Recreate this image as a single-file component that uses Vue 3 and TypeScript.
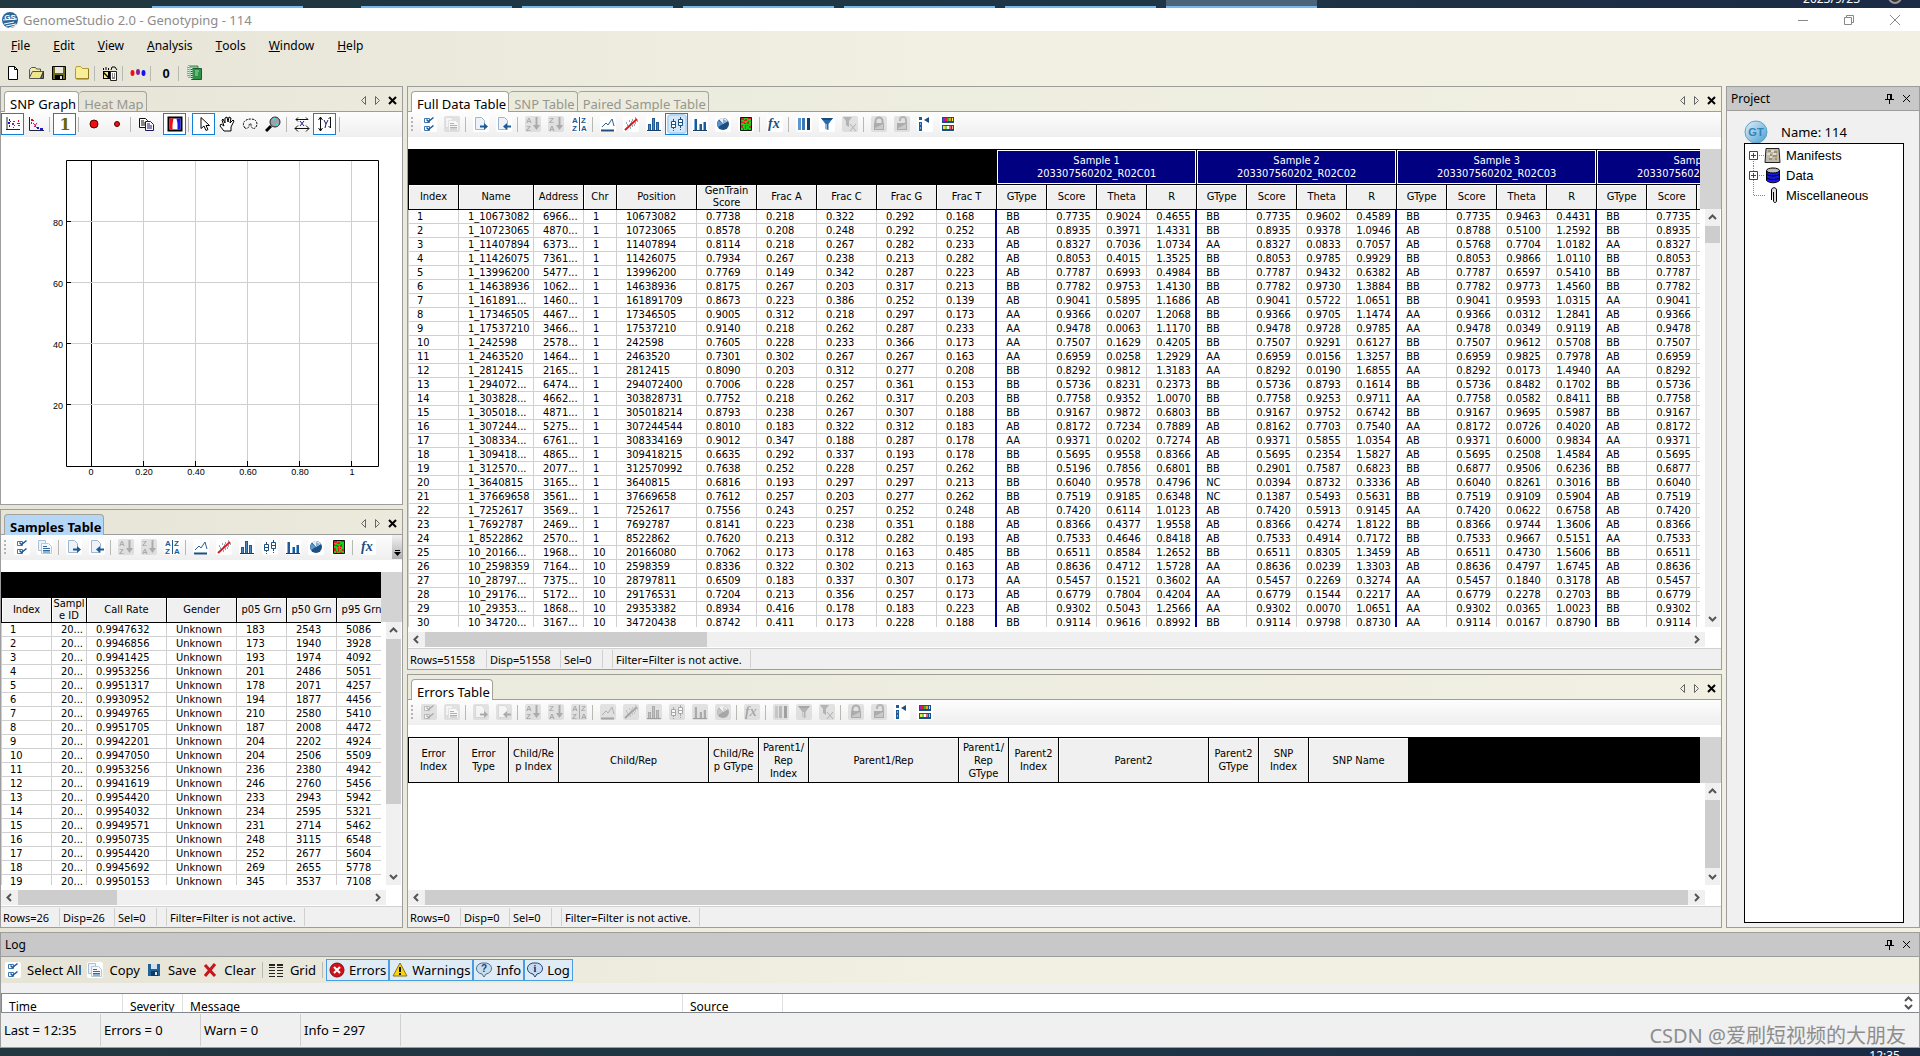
<script setup lang="ts">
import { ref } from 'vue'

interface Tool {
  icon: string
  label: string
  on?: boolean
  off?: boolean
  sep?: boolean
  gap?: boolean
}

const F = 'font-family="Liberation Sans, sans-serif"'
const pie = '<circle cx="8" cy="8" r="6" fill="#1d4f80"/><path d="M8 8L4 3.500A6 6 0 0 1 13 5z" fill="#fff" opacity=".9"/><path d="M8 8V3l4 2z" fill="#7fb0dd"/><path d="M8 8L3 11A6 6 0 0 1 3.500 4.500z" fill="#5a96d2"/>'
const letters = (a: string, b: string) =>
  `<text x="1" y="7" font-size="8" font-weight="bold" fill="#1d5a96" ${F}>${a}</text><text x="1" y="15" font-size="8" font-weight="bold" fill="#1d5a96" ${F}>${b}</text>`

const icons: Record<string, string> = {
  new: '<path d="M3.500 1.500h6l3 3v10h-9z" fill="#fff" stroke="#000"/><path d="M9.500 1.500v3h3" fill="none" stroke="#000"/>',
  open: '<path d="M1.500 4.500l2-2h4l1 1.500h4v3" fill="#f5efa0" stroke="#555"/><path d="M1.500 4.500v9h11l3-7h-11l-3 6" fill="#efe68a" stroke="#555"/><path d="M12.500 13.500l3-7v7z" fill="#777" stroke="#333"/>',
  save: '<path d="M1.500 1.500h13v13h-13z" fill="#6b6a12" stroke="#000"/><path d="M4 2h8v6H4z" fill="#e8e7d8"/><path d="M4 10h8v4H4z" fill="#000"/><path d="M9 11h2v3H9z" fill="#ddd"/>',
  folder: '<path d="M1.500 3.500l1-2h4l2 2h6v10h-13z" fill="#f9ee98" stroke="#b39a35"/><path d="M14.500 4v10h-12" fill="none" stroke="#8d7720"/>',
  props: '<path d="M1 6h13v8H1z" fill="#000"/><path d="M2 7l4 0v4z" fill="#f3ed80"/><path d="M2 9l4 4H2z" fill="#fff36b"/><path d="M1.500 5V3M4 5V2M6.500 5V3M9 5l1-3h3l2 3" fill="none" stroke="#000"/><path d="M8.500 6.500h6v9h-6z" fill="#fff" stroke="#222"/><path d="M10 9h1M12 9h1M10 11h1M12 11h1M10 13h3" stroke="#111"/>',
  dots: '<ellipse cx="2.500" cy="8" rx="2" ry="3" fill="#f01010"/><ellipse cx="8" cy="7" rx="2" ry="3" fill="#8a1f98"/><ellipse cx="13.500" cy="8" rx="2" ry="3" fill="#1414ee"/>',
  zero: '<text x="8" y="13" font-size="13" font-weight="bold" text-anchor="middle" fill="#000" font-family="Liberation Sans, sans-serif">0</text>',
  book: '<path d="M2 1h10v11H2z" fill="#7cc98a" stroke="#3d8a50"/><path d="M5.500 3.500h10v11h-10z" fill="#2f9148" stroke="#1b5c2c"/><path d="M2.500 1v12M5.500 3v12" stroke="#eee" stroke-dasharray="1 1" stroke-width="2"/><path d="M9 6h4M9 8h3M9 10h3" stroke="#9be0a8"/>',
  cart: '<path d="M2 1v13M1 13.500h14" stroke="#223" fill="none"/><path d="M4 3h1v2H4zM3 6h2v2H3zM4 9h1v2H4zM5 5h1v1H5z" fill="#1414dd"/><path d="M8 5h2v1H8zM7 7h2v2H7zM9 9h1v1H9zM8 11h1v1H8z" fill="#8a1f98"/><path d="M13 4h1v2h-1zM12 7h3v1h-3zM13 9h2v1h-2z" fill="#e01010"/>',
  polar: '<path d="M1.500 1v13.500H16" stroke="#224" fill="none"/><path d="M3 3h2v2H3zM3 6h1v2H3zM5 4h1v1H5z" fill="#e01010"/><path d="M5 7l3 3M7 10l2 2M9 7l-3 4" stroke="#a02080"/><path d="M9 11h2v2H9zM12 12h3v2h-3z" fill="#1414dd"/>',
  one: '<text x="8" y="14" font-size="16" font-weight="bold" text-anchor="middle" fill="#6b6a00" font-family="DejaVu Serif, serif">1</text>',
  bigdot: '<circle cx="8" cy="8" r="4" fill="#ee1111" stroke="#500"/>',
  dot: '<circle cx="8" cy="8" r="2.500" fill="#ee1111" stroke="#500"/>',
  copy: '<path d="M1.500 2.500h6l2 2v7h-8z" fill="#fff" stroke="#111"/><path d="M3 5h3M3 7h4M3 9h4" stroke="#111"/><path d="M7.500 5.500h5l3 3v6h-8z" fill="#fff" stroke="#15156a"/><path d="M9 8h3M9 10h5M9 12h5" stroke="#15156a"/>',
  shade: '<path d="M1.500 1.500h13v13h-13z" fill="#fff" stroke="#000" stroke-width="2"/><path d="M2.500 2.500h4l-1 6v5h-3z" fill="#ee1111"/><path d="M13.500 2.500h-4l1 5v6h3z" fill="#1414ee"/>',
  arrow: '<path d="M5 1.500v11l3-2.500 2 4.500 2-1-2-4h3.500z" fill="#fff" stroke="#000"/>',
  hand: '<path d="M5 15l-4-5 1-2 3 2-2-6 1-1 2 4V2l2-1 1 5 1-5 2 1-1 5 3-3 1 1-3 6v4z" fill="#fff" stroke="#000"/>',
  lasso: '<path d="M3 12C-1 7 3 3 9 3s7 5 5 8-5 1-5-2-2-1-2 1-3 3-4 2z" fill="none" stroke="#000" stroke-dasharray="2 1"/>',
  lens: '<circle cx="10" cy="6" r="5" fill="#9ca3a6" stroke="#222"/><path d="M8 4l2-2M11 9l2-1" stroke="#38e0e8" stroke-width="2"/><path d="M6 10l-5 5" stroke="#000" stroke-width="3"/>',
  wide: '<path d="M2 3.500h12M2 3.500l2-2M2 3.500l2 2M14 3.500l-2-2M1 12.500h14M1 12.500l3-3M1 12.500l3 3M15 12.500l-3-3M15 12.500l-3 3" stroke="#111" fill="none"/><path d="M6 5l4 5M10 5l-4 5" stroke="#171780"/>',
  tall: '<path d="M3.500 1v14M3.500 1l-2 3M3.500 1l2 3M3.500 15l-2-3M3.500 15l2-3M13.500 1v11M13.500 1l-2 2M13.500 12l-2-2" stroke="#111" fill="none"/><path d="M7 4l2 4 2-4M9 8l-1 4" stroke="#171780" fill="none"/>',
  checks: '<path d="M3.500 2.500h5v4h-5zM3.500 10.500h5v4h-5z" fill="#fff" stroke="#3b76ae"/><path d="M5.500 3.500l2 2 5-4M5.500 11.500l2 2 5-4" fill="none" stroke="#1c5a96" stroke-width="1.500"/>',
  docs: '<path d="M1.500 1.500h7v10h-7z" fill="#eaf2fa" stroke="#a8bfd6"/><path d="M4.500 4.500h7l3 3v7h-10z" fill="#f5f9fd" stroke="#b5c8da"/><path d="M6 7.500h4M6 9.500h7M6 11.500h7M6 13h7" stroke="#31689c"/>',
  exp: '<path d="M2.500 1.500h6l3 3v9h-9z" fill="#edf3f9" stroke="#9db6cd"/><path d="M7 10.500h5" stroke="#1d5a96" stroke-width="2"/><path d="M11 7l4 3.500-4 3.500z" fill="#1d5a96"/>',
  imp: '<path d="M2.500 1.500h6l3 3v9h-9z" fill="#edf3f9" stroke="#9db6cd"/><path d="M10 10.500h5" stroke="#1d5a96" stroke-width="2"/><path d="M11 7l-4 3.500 4 3.500z" fill="#1d5a96"/>',
  az: letters('A', 'Z') + '<path d="M11.500 1v10" stroke="#1d5a96" stroke-width="2"/><path d="M8 9h7l-3.500 5z" fill="#1d5a96"/>',
  za: letters('Z', 'A') + '<path d="M11.500 1v10" stroke="#1d5a96" stroke-width="2"/><path d="M8 9h7l-3.500 5z" fill="#1d5a96"/>',
  azza: `<g font-size="8" font-weight="bold" fill="#1d5a96" ${F}><text x="1" y="7">A</text><text x="1" y="15">Z</text><text x="10" y="7">Z</text><text x="10" y="15">A</text></g><path d="M8.500 1v14" stroke="#1d5a96"/>`,
  line: '<path d="M1 14.500h13" stroke="#1d4f80" stroke-width="2"/><path d="M2 11l4-4 2 2 4-6 2 7" fill="none" stroke="#2a6299"/>',
  scat: '<path d="M2 14L14 3" stroke="#dd1b1b" stroke-width="2"/><path d="M4 9h1M7 8h1M6 5h1M9 4h1M12 2h1M12 7h1M9 10h1M11 9h1M14 5h1M7 12h1M8 6h1M3 7h1" stroke="#1d4f80"/>',
  hist: '<path d="M2 8h3v6H2zM6 2h3v12H6zM10 6h3v8h-3z" fill="#1d5a96"/><path d="M3 9h1v5H3zM7 3h1v11H7zM11 7h1v7h-1z" fill="#4f87bd"/><path d="M1 14.500h14" stroke="#163f66"/>',
  box: '<path d="M2.500 5.500h4v6h-4zM9.500 3.500h4v6h-4z" fill="#fff" stroke="#1d4f80"/><path d="M4.500 3v2M4.500 12v1M11.500 1v2M11.500 10v2M2 8.500h5M9 6.500h5" stroke="#1d4f80"/><path d="M4 14h1v1H4zM11 13h1v1h-1z" fill="#c11"/>',
  bars: '<path d="M2 3h3v11H2zM7 8h3v6H7zM11 6h3v8h-3z" fill="#1d5a96"/><path d="M2 3h1v11H2zM7 8h1v6H7zM11 6h1v8h-1z" fill="#7fb0dd"/><path d="M1 14.500h14" stroke="#163f66"/>',
  pie,
  heat: '<path d="M2.500 1.500h11v13h-11z" fill="#17d017" stroke="#111"/><path d="M3 2h3v2H3zM7 3h2v2H7zM10 2h3v1h-3zM4 6h3v1H4zM9 6h2v2H9zM3 9h2v3H3zM7 9h1v4H7zM11 10h2v2h-2zM5 12h1v2H5zM10 5h1v1h-1zM6 7h2v1H6zM3 5h1v2H3zM9 9h1v1H9zM9 13h2v1H9zM6 4h1v1H6z" fill="#e81c1c"/>',
  fx: '<text x="1" y="12" font-size="14" font-style="italic" font-weight="bold" fill="#1d4f80" font-family="Liberation Serif, serif">fx</text>',
  cols: '<path d="M2 2h3v12H2z" fill="#5a96d2"/><path d="M6 2h3v12H6z" fill="#3a78b8"/><path d="M11 2h3v12h-3z" fill="#163f66"/>',
  filter: '<path d="M2 2h12L9.500 8v6l-3-1V8z" fill="#2a6aa8"/><path d="M2 2h12l-2 2H4z" fill="#174b7c"/><path d="M7 8h1v5H7z" fill="#8bb8e0"/>',
  unfilter: '<path d="M1 1h9L7 5v6L4 9V5z" fill="#2a6aa8"/><path d="M8 8l6 7M14 8l-6 7" stroke="#2a6aa8"/>',
  lock: '<path d="M4.500 8V5a3.500 3.500 0 0 1 7 0v3" fill="none" stroke="#456" stroke-width="2"/><path d="M3 7h10v7H3z" fill="#456"/><path d="M4 12l8-4v5H4z" fill="#89a"/>',
  unlock: '<path d="M6 5V4a3 3 0 0 1 6 0v4" fill="none" stroke="#567" stroke-width="2"/><path d="M3 7h10v7H3z" fill="#456"/><path d="M4 12l8-4v5H4z" fill="#89a"/>',
  info: '<path d="M2 1h3v3H2zM2 6h3v9H2z" fill="#1d5a96"/><path d="M3 7h1v2H3zM3 11h1v2H3z" fill="#7fb0dd"/><path d="M12 1v6L7 4z" fill="#1d4f80"/>',
  bands: '<path d="M2 1h12v6H2zM2 9h12v6H2z" fill="#15508a"/><path d="M3 2h2v3H3z" fill="#b01bc0"/><path d="M5 2h2v3H5z" fill="#e82020"/><path d="M7 2h2v3H7z" fill="#30b030"/><path d="M9 2h2v3H9z" fill="#f0a020"/><path d="M12 2h1v3h-1z" fill="#f8f040"/><path d="M3 10h2v3H3z" fill="#f0e040"/><path d="M5 10h2v3H5z" fill="#80d060"/><path d="M7 10h2v3H7z" fill="#fff"/><path d="M9 10h2v3H9z" fill="#f06060"/><path d="M12 10h1v3h-1z" fill="#ffb090"/>',
  disk: '<path d="M2 2h12v12H2z" fill="#22609a"/><path d="M5 2h6v5H5z" fill="#cfe0f0"/><path d="M5 9h7v5H5z" fill="#0f3a66"/><path d="M9 10h2v3H9z" fill="#dce8f3"/>',
  clear: '<path d="M3 3l10 11M13 2L3 14" stroke="#c8141b" stroke-width="3" fill="none"/>',
  grid: '<path d="M1 2h6v2H1zM1 5h6v1H1zM1 8h6v1H1zM1 11h6v1H1zM1 14h6v1H1zM9 2h6v2H9zM9 5h6v1H9zM9 8h6v1H9zM9 11h6v1H9zM9 14h6v1H9z" fill="#222"/>',
  error: '<circle cx="8" cy="8" r="7" fill="#d0121a" stroke="#8c0a10"/><path d="M5 5l6 6M11 5l-6 6" stroke="#fff" stroke-width="2"/>',
  warn: '<path d="M8 1l7 13H1z" fill="#f8d412" stroke="#8a7410"/><path d="M8 5v5M8 11v2" stroke="#111" stroke-width="2"/>',
  help: `<path d="M8 1a6.500 5.500 0 0 1 2 11l-2 3-2-3A6.500 5.500 0 0 1 8 1z" fill="#c8dcea" stroke="#486f92"/><text x="8" y="10" font-size="10" font-weight="bold" text-anchor="middle" fill="#1c3f7c" ${F}>?</text>`,
  note: '<path d="M8 1a6.500 5.500 0 0 1 2 11l-2 3-2-3A6.500 5.500 0 0 1 8 1z" fill="#c4dcf0" stroke="#26407c"/><text x="8" y="10" font-size="10" font-weight="bold" text-anchor="middle" fill="#101c6c" font-family="Liberation Serif, serif">i</text>',
}

const menus = ['File', 'Edit', 'View', 'Analysis', 'Tools', 'Window', 'Help']

const mainTools: Tool[] = [
  { icon: 'new', label: 'New project' },
  { icon: 'open', label: 'Open project' },
  { icon: 'save', label: 'Save project' },
  { icon: 'folder', label: 'Close project' },
  { icon: 'props', label: 'Properties', sep: true },
  { icon: 'dots', label: 'Cluster all SNPs', sep: true },
  { icon: 'zero', label: 'Zero SNPs', sep: true },
  { icon: 'book', label: 'Report wizard', sep: true },
]

const graphTools: Tool[] = [
  { icon: 'cart', label: 'Cartesian', on: true },
  { icon: 'polar', label: 'Polar' },
  { icon: 'one', label: 'Normalize', on: true, sep: true },
  { icon: 'bigdot', label: 'Larger points', sep: true },
  { icon: 'dot', label: 'Smaller points' },
  { icon: 'copy', label: 'Copy plot', sep: true },
  { icon: 'shade', label: 'Shade regions', on: true, gap: true },
  { icon: 'arrow', label: 'Pointer', on: true, sep: true },
  { icon: 'hand', label: 'Pan' },
  { icon: 'lasso', label: 'Lasso' },
  { icon: 'lens', label: 'Zoom' },
  { icon: 'wide', label: 'Auto scale X', sep: true },
  { icon: 'tall', label: 'Auto scale Y', on: true },
]

const tableTools: Tool[] = [
  { icon: 'checks', label: 'Select all' },
  { icon: 'docs', label: 'Copy' },
  { icon: 'exp', label: 'Export', sep: true },
  { icon: 'imp', label: 'Import' },
  { icon: 'az', label: 'Sort ascending', sep: true },
  { icon: 'za', label: 'Sort descending' },
  { icon: 'azza', label: 'Sort by columns' },
  { icon: 'line', label: 'Line plot', sep: true },
  { icon: 'scat', label: 'Scatter plot' },
  { icon: 'hist', label: 'Histogram' },
  { icon: 'box', label: 'Box plot' },
  { icon: 'bars', label: 'Frequency plot' },
  { icon: 'pie', label: 'Pie chart' },
  { icon: 'heat', label: 'Heat map' },
  { icon: 'fx', label: 'Functions', sep: true },
  { icon: 'cols', label: 'Column chooser', sep: true },
  { icon: 'filter', label: 'Filter rows' },
  { icon: 'unfilter', label: 'Clear filter' },
  { icon: 'lock', label: 'Lock', sep: true },
  { icon: 'unlock', label: 'Unlock' },
  { icon: 'info', label: 'Marks' },
  { icon: 'bands', label: 'Colors' },
]

const withState = (off: string[], on: string[] = []): Tool[] =>
  tableTools.map(t => ({ ...t, off: off.includes(t.icon), on: on.includes(t.icon) }))

const fullTools = withState(['docs', 'az', 'za', 'unfilter', 'lock', 'unlock'], ['box'])
const sampleTools = withState(['az', 'za']).slice(0, 15)
const errorTools = withState(tableTools.slice(0, 20).map(t => t.icon)).filter(t => t.icon !== 'heat')

const fullCols = [
  { t: 'Index', w: 51 }, { t: 'Name', w: 75 }, { t: 'Address', w: 50 }, { t: 'Chr', w: 33 },
  { t: 'Position', w: 80 }, { t: 'GenTrain Score', w: 60 }, { t: 'Frac A', w: 60 },
  { t: 'Frac C', w: 60 }, { t: 'Frac G', w: 60 }, { t: 'Frac T', w: 60 },
]
const subCols = ['GType', 'Score', 'Theta', 'R']
const groups = [1, 2, 3, 4]

const fullRows = `1_10673082 6966... 1 10673082 0.7738 0.218 0.322 0.292 0.168 BB 0.7735 0.9024 0.4655 BB 0.7735 0.9602 0.4589 BB 0.7735 0.9463 0.4431 BB 0.7735
1_10723065 4870... 1 10723065 0.8578 0.208 0.248 0.292 0.252 AB 0.8935 0.3971 1.4331 BB 0.8935 0.9378 1.0946 AB 0.8788 0.5100 1.2592 BB 0.8935
1_11407894 6373... 1 11407894 0.8114 0.218 0.267 0.282 0.233 AB 0.8327 0.7036 1.0734 AA 0.8327 0.0833 0.7057 AB 0.5768 0.7704 1.0182 AA 0.8327
1_11426075 7361... 1 11426075 0.7934 0.267 0.238 0.213 0.282 AB 0.8053 0.4015 1.3525 BB 0.8053 0.9785 0.9929 BB 0.8053 0.9866 1.0110 BB 0.8053
1_13996200 5477... 1 13996200 0.7769 0.149 0.342 0.287 0.223 AB 0.7787 0.6993 0.4984 BB 0.7787 0.9432 0.6382 AB 0.7787 0.6597 0.5410 BB 0.7787
1_14638936 1062... 1 14638936 0.8175 0.267 0.203 0.317 0.213 BB 0.7782 0.9753 1.4130 BB 0.7782 0.9730 1.3884 BB 0.7782 0.9773 1.4560 BB 0.7782
1_161891... 1460... 1 161891709 0.8673 0.223 0.386 0.252 0.139 AB 0.9041 0.5895 1.1686 AB 0.9041 0.5722 1.0651 BB 0.9041 0.9593 1.0315 AA 0.9041
1_17346505 4467... 1 17346505 0.9005 0.312 0.218 0.297 0.173 AA 0.9366 0.0207 1.2068 BB 0.9366 0.9705 1.1474 AA 0.9366 0.0312 1.2841 AB 0.9366
1_17537210 3466... 1 17537210 0.9140 0.218 0.262 0.287 0.233 AA 0.9478 0.0063 1.1170 BB 0.9478 0.9728 0.9785 AA 0.9478 0.0349 0.9119 AB 0.9478
1_242598 2578... 1 242598 0.7605 0.228 0.233 0.366 0.173 AA 0.7507 0.1629 0.4205 BB 0.7507 0.9291 0.6127 BB 0.7507 0.9612 0.5708 BB 0.7507
1_2463520 1464... 1 2463520 0.7301 0.302 0.267 0.267 0.163 AA 0.6959 0.0258 1.2929 AA 0.6959 0.0156 1.3257 BB 0.6959 0.9825 0.7978 AB 0.6959
1_2812415 2165... 1 2812415 0.8090 0.203 0.312 0.277 0.208 BB 0.8292 0.9812 1.3183 AA 0.8292 0.0190 1.6855 AA 0.8292 0.0173 1.4940 AA 0.8292
1_294072... 6474... 1 294072400 0.7006 0.228 0.257 0.361 0.153 BB 0.5736 0.8231 0.2373 BB 0.5736 0.8793 0.1614 BB 0.5736 0.8482 0.1702 BB 0.5736
1_303828... 4662... 1 303828731 0.7752 0.218 0.262 0.317 0.203 BB 0.7758 0.9352 1.0070 BB 0.7758 0.9253 0.9711 AA 0.7758 0.0582 0.8411 BB 0.7758
1_305018... 4871... 1 305018214 0.8793 0.238 0.267 0.307 0.188 BB 0.9167 0.9872 0.6803 BB 0.9167 0.9752 0.6742 BB 0.9167 0.9695 0.5987 BB 0.9167
1_307244... 5275... 1 307244544 0.8010 0.183 0.322 0.312 0.183 AB 0.8172 0.7234 0.7889 AB 0.8162 0.7703 0.7540 AA 0.8172 0.0726 0.4020 AB 0.8172
1_308334... 6761... 1 308334169 0.9012 0.347 0.188 0.287 0.178 AA 0.9371 0.0202 0.7274 AB 0.9371 0.5855 1.0354 AB 0.9371 0.6000 0.9834 AA 0.9371
1_309418... 4865... 1 309418215 0.6635 0.292 0.337 0.193 0.178 BB 0.5695 0.9558 0.8366 AB 0.5695 0.2354 1.5827 AB 0.5695 0.2508 1.4584 AB 0.5695
1_312570... 2077... 1 312570992 0.7638 0.252 0.228 0.257 0.262 BB 0.5196 0.7856 0.6801 BB 0.2901 0.7587 0.6823 BB 0.6877 0.9506 0.6236 BB 0.6877
1_3640815 3165... 1 3640815 0.6816 0.193 0.297 0.297 0.213 BB 0.6040 0.9578 0.4796 NC 0.0394 0.8732 0.3336 AB 0.6040 0.8261 0.3016 BB 0.6040
1_37669658 3561... 1 37669658 0.7612 0.257 0.203 0.277 0.262 BB 0.7519 0.9185 0.6348 NC 0.1387 0.5493 0.5631 BB 0.7519 0.9109 0.5904 AB 0.7519
1_7252617 3569... 1 7252617 0.7556 0.243 0.257 0.252 0.248 AB 0.7420 0.6114 1.0123 AB 0.7420 0.5913 0.9145 AA 0.7420 0.0622 0.6758 AB 0.7420
1_7692787 2469... 1 7692787 0.8141 0.223 0.238 0.351 0.188 AB 0.8366 0.4377 1.9558 AB 0.8366 0.4274 1.8122 BB 0.8366 0.9744 1.3606 AB 0.8366
1_8522862 2570... 1 8522862 0.7620 0.213 0.312 0.282 0.193 AB 0.7533 0.4646 0.8418 AB 0.7533 0.4914 0.7172 BB 0.7533 0.9667 0.5151 AA 0.7533
10_20166... 1968... 10 20166080 0.7062 0.173 0.178 0.163 0.485 BB 0.6511 0.8584 1.2652 BB 0.6511 0.8305 1.3459 AB 0.6511 0.4730 1.5606 BB 0.6511
10_2598359 7164... 10 2598359 0.8336 0.322 0.302 0.213 0.163 AB 0.8636 0.4712 1.5728 AA 0.8636 0.0239 1.3303 AB 0.8636 0.4797 1.6745 AB 0.8636
10_28797... 7375... 10 28797811 0.6509 0.183 0.337 0.307 0.173 AA 0.5457 0.1521 0.3602 AA 0.5457 0.2269 0.3274 AA 0.5457 0.1840 0.3178 AB 0.5457
10_29176... 5172... 10 29176531 0.7204 0.213 0.356 0.257 0.173 AB 0.6779 0.7804 0.4204 AA 0.6779 0.1544 0.2217 AA 0.6779 0.2278 0.2703 BB 0.6779
10_29353... 1868... 10 29353382 0.8934 0.416 0.178 0.183 0.223 AB 0.9302 0.5043 1.2566 AA 0.9302 0.0070 1.0651 AA 0.9302 0.0365 1.0023 BB 0.9302
10_34720... 3167... 10 34720438 0.8742 0.411 0.173 0.228 0.188 BB 0.9114 0.9616 0.8992 BB 0.9114 0.9798 0.8730 AA 0.9114 0.0167 0.8790 BB 0.9114`
  .split('\n')
  .map((line, i) => [String(i + 1), ...line.split(' '), '', ''])

const sampleCols = [
  { t: 'Index', w: 51 }, { t: 'Sampl e ID', w: 35 }, { t: 'Call Rate', w: 80 }, { t: 'Gender', w: 70 },
  { t: 'p05 Grn', w: 50 }, { t: 'p50 Grn', w: 50 }, { t: 'p95 Grn', w: 50 },
]
const sampleRows = `0.9947632 183 2543 5086
0.9946856 173 1940 3928
0.9941425 193 1974 4092
0.9953256 201 2486 5051
0.9951317 178 2071 4257
0.9930952 194 1877 4456
0.9949765 210 2580 5410
0.9951705 187 2008 4472
0.9942201 204 2202 4924
0.9947050 204 2506 5509
0.9953256 236 2380 4942
0.9941619 246 2760 5456
0.9954420 233 2943 5942
0.9954032 234 2595 5321
0.9949571 231 2714 5462
0.9950735 248 3115 6548
0.9954420 252 2677 5604
0.9945692 269 2655 5778
0.9950153 345 3537 7108`
  .split('\n')
  .map((line, i) => {
    const [rate, ...grn] = line.split(' ')
    return [String(i + 1), '20...', rate, 'Unknown', ...grn]
  })

const errorCols = [
  { t: 'Error Index', w: 51 }, { t: 'Error Type', w: 50 }, { t: 'Child/Re p Index', w: 50 },
  { t: 'Child/Rep', w: 150 }, { t: 'Child/Re p GType', w: 50 }, { t: 'Parent1/ Rep Index', w: 50 },
  { t: 'Parent1/Rep', w: 150 }, { t: 'Parent1/ Rep GType', w: 50 }, { t: 'Parent2 Index', w: 50 },
  { t: 'Parent2', w: 150 }, { t: 'Parent2 GType', w: 50 }, { t: 'SNP Index', w: 50 }, { t: 'SNP Name', w: 100 },
]

const xTicks = [
  { x: 143, t: '0.20' }, { x: 195, t: '0.40' }, { x: 247, t: '0.60' }, { x: 299, t: '0.80' }, { x: 351, t: '1' },
]
const yTicks = [
  { y: 221, t: '80' }, { y: 282, t: '60' }, { y: 343, t: '40' }, { y: 404, t: '20' },
]

const logFilters = ref([
  { icon: 'error', t: 'Errors' }, { icon: 'warn', t: 'Warnings' }, { icon: 'help', t: 'Info' }, { icon: 'note', t: 'Log' },
])
const logActions = [
  { icon: 'checks', t: 'Select All', tile: true }, { icon: 'docs', t: 'Copy', tile: true },
  { icon: 'disk', t: 'Save' }, { icon: 'clear', t: 'Clear' },
]
const logCols = [
  { t: 'Time', w: 121 }, { t: 'Severity', w: 60 }, { t: 'Message', w: 500 }, { t: 'Source', w: 100 },
]
</script>

<template>
  <div class="screen">
    <div class="desk desk-top">
      <i class="task first"></i><i class="task"></i><i class="task"></i><i class="task"></i><i class="task"></i><i class="task"></i><i class="task lit"></i>
      <span class="date">2023/9/23</span><i class="bell"></i>
    </div>

    <header class="title">
      <svg width="18" height="18" viewBox="0 0 18 18" aria-hidden="true">
        <circle cx="9" cy="9" r="8" fill="#2f6897" />
        <path d="M3 13l10-2M5 15l10-2M8 17l8-3M2 9l14-1" stroke="#fff" />
        <text x="9" y="9" font-size="8" font-weight="bold" fill="#fff" text-anchor="middle" font-family="Liberation Sans, sans-serif">GS</text>
      </svg>
      <h1>GenomeStudio 2.0 - Genotyping - 114</h1>
      <div class="win">
        <button aria-label="Minimize"><svg width="12" height="12"><path d="M1 6.500h10" stroke="#888" /></svg></button>
        <button aria-label="Restore"><svg width="12" height="12"><path d="M1.500 3.500h7v7h-7zM3.500 3V1.500h7v7H9" fill="none" stroke="#888" /></svg></button>
        <button aria-label="Close"><svg width="12" height="12"><path d="M1 1l10 10M11 1L1 11" stroke="#888" /></svg></button>
      </div>
    </header>

    <div class="client">
      <nav class="menu">
        <button v-for="m in menus" :key="m"><u>{{ m[0] }}</u>{{ m.slice(1) }}</button>
      </nav>
      <div class="main-tools">
        <button v-for="t in mainTools" :key="t.icon" class="tool" :class="{ narrow: t.sep }" :aria-label="t.label">
          <svg width="16" height="16" viewBox="0 0 16 16" v-html="icons[t.icon]"></svg>
        </button>
      </div>

      <main class="work">
        <div class="col left">
          <section class="panel">
            <div class="tabs">
              <button class="tab on">SNP Graph</button><button class="tab">Heat Map</button>
              <div class="nav">
                <button aria-label="Previous tab"><svg width="7" height="9"><path d="M5.500 0.500v8l-4-4z" fill="none" stroke="#666" /></svg></button>
                <button aria-label="Next tab"><svg width="7" height="9"><path d="M1.500 0.500v8l4-4z" fill="none" stroke="#666" /></svg></button>
                <button aria-label="Close panel"><svg width="9" height="9"><path d="M1 1l7 7M8 1L1 8" stroke="#000" stroke-width="2" /></svg></button>
              </div>
            </div>
            <div class="tools flush">
              <button v-for="t in graphTools" :key="t.icon" class="tool" :class="{ on: t.on, sep: t.sep, gap: t.gap }" :aria-label="t.label">
                <svg width="16" height="16" viewBox="0 0 16 16" v-html="icons[t.icon]"></svg>
              </button>
              <i class="end"></i>
            </div>
            <svg class="plot" viewBox="1 137 401 367" aria-label="SNP graph">
              <g fill="none" stroke="#cfcfcf" shape-rendering="crispEdges">
                <path v-for="x in xTicks" :key="x.x" :d="`M${x.x}.5 161V466`" />
              </g>
              <path d="M91.500 161V466" stroke="#000" />
              <g fill="none" stroke="#cfcfcf">
                <path v-for="y in yTicks" :key="y.y" :d="`M67 ${y.y}.5H378`" />
              </g>
              <path d="M66.500 160.500h312v306h-312z" fill="none" stroke="#000" />
              <path v-for="x in xTicks" :key="x.t" :d="`M${x.x}.5 461v5`" stroke="#000" />
              <path v-for="y in yTicks" :key="y.t" :d="`M67 ${y.y}.5h4`" stroke="#000" />
              <text v-for="y in yTicks" :key="y.t" x="63" :y="y.y + 5" text-anchor="end">{{ y.t }}</text>
              <text x="91" y="475" text-anchor="middle">0</text>
              <text v-for="x in xTicks" :key="x.t" :x="x.x + 1" y="475" text-anchor="middle">{{ x.t }}</text>
            </svg>
          </section>

          <section class="panel">
            <div class="tabs">
              <button class="tab focus">Samples Table</button>
              <div class="nav">
                <button aria-label="Previous tab"><svg width="7" height="9"><path d="M5.500 0.500v8l-4-4z" fill="none" stroke="#666" /></svg></button>
                <button aria-label="Next tab"><svg width="7" height="9"><path d="M1.500 0.500v8l4-4z" fill="none" stroke="#666" /></svg></button>
                <button aria-label="Close panel"><svg width="9" height="9"><path d="M1 1l7 7M8 1L1 8" stroke="#000" stroke-width="2" /></svg></button>
              </div>
            </div>
            <div class="tools">
              <i class="grip"></i>
              <button v-for="t in sampleTools" :key="t.icon" class="tool" :class="{ on: t.on, sep: t.sep, off: t.off }" :aria-label="t.label" :disabled="t.off">
                <svg class="tile" width="16" height="16" viewBox="0 0 16 16" v-html="icons[t.icon]"></svg>
              </button>
              <button class="more" aria-label="More tools"><svg width="7" height="7"><path d="M1 1.500h5" stroke="#000" /><path d="M0 3h7L3.500 7z" /></svg></button>
            </div>
            <div class="sheet">
              <div class="view">
                <table>
                  <colgroup><col v-for="c in sampleCols" :key="c.t" :style="{ width: c.w + 'px' }" /></colgroup>
                  <thead>
                    <tr class="band short"><td colspan="7"></td></tr>
                    <tr class="head"><th v-for="c in sampleCols" :key="c.t">{{ c.t }}</th></tr>
                  </thead>
                  <tbody>
                    <tr v-for="r in sampleRows" :key="r[0]"><td v-for="(c, i) in r" :key="i">{{ c }}</td></tr>
                  </tbody>
                </table>
              </div>
              <div class="rail">
                <div class="cap s-cap"></div>
                <div class="vbar"><svg class="up" width="9" height="6"><path d="M1 5l3.500-3.500L8 5" /></svg><i class="s-thumb"></i><svg class="down" width="9" height="6"><path d="M1 1l3.500 3.500L8 1" /></svg></div>
              </div>
            </div>
            <div class="hbar"><svg width="6" height="9"><path d="M5 1L1.500 4.500 5 8" /></svg><i class="s-ht"></i><svg width="6" height="9"><path d="M1 1l3.500 3.500L1 8" /></svg></div>
            <footer class="status"><span class="s1">Rows=26</span><span class="s2">Disp=26</span><span class="s3">Sel=0</span><span class="s4"></span><span class="s5">Filter=Filter is not active.</span></footer>
          </section>
        </div>

        <div class="col center">
          <section class="panel big">
            <div class="tabs">
              <button class="tab on">Full Data Table</button><button class="tab">SNP Table</button><button class="tab">Paired Sample Table</button>
              <div class="nav">
                <button aria-label="Previous tab"><svg width="7" height="9"><path d="M5.500 0.500v8l-4-4z" fill="none" stroke="#666" /></svg></button>
                <button aria-label="Next tab"><svg width="7" height="9"><path d="M1.500 0.500v8l4-4z" fill="none" stroke="#666" /></svg></button>
                <button aria-label="Close panel"><svg width="9" height="9"><path d="M1 1l7 7M8 1L1 8" stroke="#000" stroke-width="2" /></svg></button>
              </div>
            </div>
            <div class="tools">
              <i class="grip"></i>
              <button v-for="t in fullTools" :key="t.icon" class="tool" :class="{ on: t.on, sep: t.sep, off: t.off }" :aria-label="t.label" :disabled="t.off">
                <svg class="tile" width="16" height="16" viewBox="0 0 16 16" v-html="icons[t.icon]"></svg>
              </button>
            </div>
            <div class="sheet">
              <div class="view">
                <table>
                  <colgroup>
                    <col v-for="c in fullCols" :key="c.t" :style="{ width: c.w + 'px' }" />
                    <col v-for="n in 16" :key="n" class="sub" />
                  </colgroup>
                  <thead>
                    <tr class="band"><td colspan="10"></td><th v-for="g in groups" :key="g" colspan="4"><div>Sample {{ g }}<br />203307560202_R02C0{{ g }}</div></th></tr>
                    <tr class="head">
                      <th v-for="c in fullCols" :key="c.t">{{ c.t }}</th>
                      <template v-for="g in groups" :key="g"><th v-for="s in subCols" :key="s">{{ s }}</th></template>
                    </tr>
                  </thead>
                  <tbody>
                    <tr v-for="r in fullRows" :key="r[0]">
                      <td v-for="(c, i) in r" :key="i" :class="{ rule: i > 8 && (i - 9) % 4 === 0 }">{{ c }}</td>
                    </tr>
                  </tbody>
                </table>
              </div>
              <div class="rail">
                <div class="cap f-cap"></div>
                <div class="vbar"><svg class="up" width="9" height="6"><path d="M1 5l3.500-3.500L8 5" /></svg><i class="f-thumb"></i><svg class="down" width="9" height="6"><path d="M1 1l3.500 3.500L8 1" /></svg></div>
              </div>
            </div>
            <div class="hbar"><svg width="6" height="9"><path d="M5 1L1.500 4.500 5 8" /></svg><i class="f-ht"></i><svg width="6" height="9"><path d="M1 1l3.500 3.500L1 8" /></svg></div>
            <footer class="status wide"><span class="s1">Rows=51558</span><span class="s2">Disp=51558</span><span class="s3">Sel=0</span><span class="s4"></span><span class="s5">Filter=Filter is not active.</span></footer>
          </section>

          <section class="panel small">
            <div class="tabs">
              <button class="tab on">Errors Table</button>
              <div class="nav">
                <button aria-label="Previous tab"><svg width="7" height="9"><path d="M5.500 0.500v8l-4-4z" fill="none" stroke="#666" /></svg></button>
                <button aria-label="Next tab"><svg width="7" height="9"><path d="M1.500 0.500v8l4-4z" fill="none" stroke="#666" /></svg></button>
                <button aria-label="Close panel"><svg width="9" height="9"><path d="M1 1l7 7M8 1L1 8" stroke="#000" stroke-width="2" /></svg></button>
              </div>
            </div>
            <div class="tools">
              <i class="grip"></i>
              <button v-for="t in errorTools" :key="t.icon" class="tool" :class="{ on: t.on, sep: t.sep, off: t.off }" :aria-label="t.label" :disabled="t.off">
                <svg class="tile" width="16" height="16" viewBox="0 0 16 16" v-html="icons[t.icon]"></svg>
              </button>
            </div>
            <div class="sheet">
              <div class="view dark">
                <table>
                  <colgroup><col v-for="c in errorCols" :key="c.t" :style="{ width: c.w + 'px' }" /></colgroup>
                  <thead><tr class="head tall"><th v-for="c in errorCols" :key="c.t">{{ c.t }}</th></tr></thead>
                </table>
              </div>
              <div class="rail">
                <div class="cap e-cap"></div>
                <div class="vbar"><svg class="up" width="9" height="6"><path d="M1 5l3.500-3.500L8 5" /></svg><i class="e-thumb"></i><svg class="down" width="9" height="6"><path d="M1 1l3.500 3.500L8 1" /></svg></div>
              </div>
            </div>
            <div class="hbar"><svg width="6" height="9"><path d="M5 1L1.500 4.500 5 8" /></svg><i class="e-ht"></i><svg width="6" height="9"><path d="M1 1l3.500 3.500L1 8" /></svg></div>
            <footer class="status zero"><span class="s1">Rows=0</span><span class="s2">Disp=0</span><span class="s3">Sel=0</span><span class="s4"></span><span class="s5">Filter=Filter is not active.</span></footer>
          </section>
        </div>

        <aside class="panel project">
          <div class="bar">
            <h2>Project</h2>
            <button aria-label="Pin"><svg width="9" height="10"><path d="M2.500 0v5M6.500 0v5M2 0.500h4M0 5.500h9M4.500 6v4M5.500 0v5" stroke="#000" fill="none" /></svg></button>
            <button aria-label="Close"><svg width="9" height="9"><path d="M1 1l7 7M8 1L1 8" stroke="#000" /></svg></button>
          </div>
          <div class="proj-name">
            <svg width="26" height="26" viewBox="0 0 26 26" aria-hidden="true">
              <defs><linearGradient id="gt" x1="0" y1="0" x2="1" y2="1"><stop offset="0" stop-color="#e2f1fa" /><stop offset="1" stop-color="#4a9bd0" /></linearGradient></defs>
              <circle cx="13" cy="13" r="11" fill="url(#gt)" stroke="#5ba4cc" />
              <text x="13" y="17" text-anchor="middle" font-size="11" font-weight="bold" fill="#2f86b8" font-family="Liberation Sans, sans-serif">GT</text>
            </svg>
            <span>Name: 114</span>
          </div>
          <ul class="tree">
            <li>
              <svg width="38" height="20"><path d="M4.500 5.500h8v8h-8zM6 9.500h5M8.500 7v5" fill="none" stroke="#444" /><path d="M14 9.500h6M8.500 15v5" stroke="#888" stroke-dasharray="1 1" /><path d="M21 2.500h13l1 14H20z" fill="#bdb9ad" stroke="#222" /><path d="M23 5h3M29 6h3M25 9h2M28 10h4M24 13h3M30 13h2" stroke="#8a6820" /><path d="M26 5h3M22 8h3M28 8h3M25 11h2" stroke="#fff" /></svg>Manifests
            </li>
            <li>
              <svg width="38" height="20"><path d="M4.500 5.500h8v8h-8zM6 9.500h5M8.500 7v5" fill="none" stroke="#444" /><path d="M14 9.500h6M8.500 0v5M8.500 14v6" stroke="#888" stroke-dasharray="1 1" /><path d="M21.500 4.500v10c3 3 10 3 13 0v-10z" fill="#1616e8" stroke="#000" /><ellipse cx="28" cy="4.500" rx="6.500" ry="2.500" fill="#bbb" stroke="#000" /><path d="M22 8.500c3 2 9 2 12 0M22 12c3 2 9 2 12 0" fill="none" stroke="#000" /></svg>Data
            </li>
            <li>
              <svg width="38" height="20"><path d="M8.500 0v9.500M9 9.500h11" fill="none" stroke="#888" stroke-dasharray="1 1" /><path d="M26.500 14V4c0-3 5-3 5 0v11c0 2-3 2-3 0V6" fill="#ddd" stroke="#000" /></svg>Miscellaneous
            </li>
          </ul>
        </aside>
      </main>

      <section class="log">
        <div class="bar">
          <h2>Log</h2>
          <button aria-label="Pin log"><svg width="9" height="10"><path d="M2.500 0v5M6.500 0v5M2 0.500h4M0 5.500h9M4.500 6v4M5.500 0v5" stroke="#000" fill="none" /></svg></button>
          <button aria-label="Close log"><svg width="9" height="9"><path d="M1 1l7 7M8 1L1 8" stroke="#000" /></svg></button>
        </div>
        <div class="log-tools">
          <button v-for="a in logActions" :key="a.t" class="act"><svg width="16" height="16" viewBox="0 0 16 16" :class="{ tile: a.tile }" v-html="icons[a.icon]"></svg>{{ a.t }}</button>
          <button class="act lined"><svg width="16" height="16" viewBox="0 0 16 16" v-html="icons.grid"></svg>Grid</button>
          <i class="div"></i>
          <button v-for="a in logFilters" :key="a.t" class="act chosen" aria-pressed="true"><svg width="16" height="16" viewBox="0 0 16 16" v-html="icons[a.icon]"></svg>{{ a.t }}</button>
        </div>
        <div class="log-list">
          <table>
            <colgroup><col v-for="c in logCols" :key="c.t" :style="{ width: c.w + 'px' }" /></colgroup>
            <thead><tr><th v-for="c in logCols" :key="c.t">{{ c.t }}</th></tr></thead>
          </table>
          <svg width="9" height="14"><path d="M1 5l3.500-3.500L8 5M1 9l3.500 3.500L8 9" fill="none" stroke="#555" stroke-width="2" /></svg>
        </div>
        <footer class="totals"><span>Last = 12:35</span><span>Errors = 0</span><span>Warn = 0</span><span>Info = 297</span></footer>
      </section>
    </div>
    <div class="desk desk-bottom"><span>12:35</span></div>
    <div class="mark">CSDN @爱刷短视频的大朋友</div>
  </div>
</template>

<style>
body { margin: 0; }
</style>

<style scoped>
.screen { position: relative; display: flex; flex-direction: column; height: 100vh; min-width: 1200px; overflow: hidden; font: 12px/16px "Noto Sans", "Noto Sans CJK SC", sans-serif; color: #000; background: #fff; }
button { margin: 0; padding: 0; border: 0; background: none; font: inherit; color: inherit; display: flex; align-items: center; justify-content: center; flex: none; }
h1, h2 { margin: 0; font-size: inherit; font-weight: 400; }
svg { display: block; flex: none; }

.desk { flex: none; display: flex; height: 8px; overflow: hidden; color: #fff; background: linear-gradient(90deg, #213840, #1e3546 60%, #1b2a45); }
.desk-top { padding-left: 152px; align-items: flex-end; gap: 10px; }
.task { width: 151px; height: 2px; background: #76b9ed; }
.task.first { margin-right: 48px; }
.task.lit { height: 8px; background: #4c6478; border-bottom: 2px solid #76b9ed; box-sizing: border-box; }
.date { margin: 0 0 2px auto; line-height: 14px; }
.bell { width: 10px; height: 10px; margin: 0 18px 4px 18px; border: 2px solid #999; border-radius: 50%; background: #333; }
.desk-bottom span { margin-left: auto; padding-right: 20px; line-height: 16px; }

.title { flex: none; display: flex; align-items: center; height: 23px; padding-left: 1px; gap: 4px; color: #8c8c8c; background: #fff; font-size: 13px; }
.win { margin-left: auto; display: flex; gap: 34px; padding-right: 19px; }

.client { flex: 1; min-height: 0; display: flex; flex-direction: column; background: linear-gradient(90deg, #e5e4d7, #f1f0e3 50%); }
.menu { flex: none; display: flex; height: 29px; padding-bottom: 2px; }
.menu button { padding: 0 12px 0 11px; }
.main-tools { flex: none; display: flex; align-items: center; height: 22px; padding: 0 0 2px 1px; }
.tool { width: 23px; height: 22px; box-sizing: border-box; border: 1px solid transparent; position: relative; }
.tool.narrow { margin-left: 5px; }
.tool.sep, .tool.gap { margin-left: 6px; }
.tool.narrow::before, .tool.sep::before { content: ""; position: absolute; left: -5px; top: 3px; width: 1px; height: 15px; background: #b9b9b3; }
.tool.on { border-color: #1280dc; background: #fff; }
.tool.on .tile { background: #d5e8f8; box-shadow: 0 0 0 2px #b5d7f3; }
.tile { background: #fff; border-radius: 2px; }
.tool.off .tile { background: #c6c6c6; filter: grayscale(1); opacity: .45; }

.work { flex: 1; min-height: 0; display: flex; gap: 4px; }
.col { display: flex; flex-direction: column; gap: 4px; min-height: 0; }
.left { flex: none; width: 403px; }
.center { flex: 1; min-width: 0; }
.panel { flex: 1 1 0; min-height: 0; display: flex; flex-direction: column; box-sizing: border-box; border: 1px solid #9d9d9d; background: #fff; }
.big { flex-grow: 585; }
.small { flex-grow: 253; }

.tabs { flex: none; display: flex; align-items: flex-end; height: 24px; padding-left: 3px; border-bottom: 1px solid #9d9d9d; background: linear-gradient(90deg, #e5e4d7, #eceadd); }
.center .tabs { background: linear-gradient(90deg, #ebebdd, #f1f0e3); }
.tab { height: 20px; padding: 4px 2px 0 5px; box-sizing: border-box; border: 1px solid #a3a39b; border-bottom: 0; border-left-width: 0; border-radius: 4px 4px 0 0; color: #97968e; font-size: 13px; line-height: 14px; }
.tab.on, .tab.focus { border-left-width: 1px; color: #000; background: #fff; margin-bottom: -1px; height: 21px; }
.tab.focus { background: #b5d6f4; font-weight: 700; }
.nav { margin-left: auto; display: flex; align-items: center; gap: 7px; height: 22px; padding-right: 5px; }

.tools { flex: none; display: flex; align-items: center; height: 25px; padding: 0 0 1px 3px; box-sizing: border-box; margin-bottom: 12px; background: linear-gradient(#fdfdfd, #efefef); }
.tools.flush { padding-left: 0; margin-bottom: 0; }
.grip { width: 2px; height: 15px; margin-right: 4px; background: repeating-linear-gradient(#b4b4b4 0 2px, transparent 2px 4px); }
.end { width: 1px; height: 15px; margin-left: 3px; background: #b9b9b3; }
.more { margin-left: auto; align-self: stretch; width: 10px; align-items: flex-end; padding-bottom: 3px; background: linear-gradient(#f2f2f2, #b0b0b0); }

.plot { flex: 1; min-height: 0; width: 100%; }
.plot text { font: 9px "Liberation Sans", sans-serif; }

.sheet { flex: 1; min-height: 0; display: flex; font: 11px/13px "DejaVu Sans Condensed", "Noto Sans", sans-serif; }
.view { flex: 1; min-width: 0; overflow: hidden; }
table { border-collapse: separate; border-spacing: 0; table-layout: fixed; width: 1px; }
.sub { width: 50px; }
.sheet td { height: 13px; padding: 0 0 1px 9px; border: 0 solid #d0d0d0; border-right-width: 1px; background: linear-gradient(#d0d0d0, #d0d0d0) left bottom / 100% 1px no-repeat; white-space: nowrap; overflow: hidden; }
.sheet td:first-child { border-left-width: 1px; padding-left: 8px; }
.sheet td.rule { border-right: 2px solid #00008b; }
.sheet .band td { height: 36px; padding: 0; background: #000; border-color: #000; }
.sheet .short td { height: 26px; }
.band th { padding: 0; font-weight: 400; color: #fff; background: #000080; border: 0 solid #000; border-width: 1px 1px 1px 0; }
.band div { border: 1px solid #fff; padding: 3px 0; line-height: 13px; }
.head th { height: 23px; padding: 0; font-weight: 400; background: #f0f0f0; border: 0 solid #000; border-width: 0 1px 1px 0; box-shadow: inset 1px 1px #fff; overflow: hidden; line-height: 12px; }
.head th:first-child { border-left-width: 1px; }
.tall th { height: 44px; border-top-width: 1px; line-height: 13px; }
.dark { background: linear-gradient(#000 46px, #fff 46px); }

.rail { flex: none; width: 21px; display: flex; flex-direction: column; }
.cap { flex: none; background: #d3d3d3; }
.s-cap { height: 50px; }
.f-cap { height: 60px; }
.e-cap { height: 46px; }
.vbar { flex: 1; min-height: 0; display: flex; flex-direction: column; align-items: center; margin: 0 1px 0 5px; background: #f0f0f0; padding: 5px 0; }
.vbar i { width: 15px; margin-top: 6px; background: #cdcdcd; }
.vbar svg, .hbar svg { fill: none; stroke: #555; stroke-width: 2; }
.vbar .down { margin-top: auto; }
.s-thumb { height: 165px; }
.f-thumb { height: 17px; }
.e-thumb { height: 68px; }
.hbar { flex: none; display: flex; align-items: center; height: 15px; margin: 5px 16px 1px 0; padding: 0 5px; background: #f0f0f0; }
.hbar i { height: 15px; margin: 0 6px; background: #cdcdcd; }
.hbar svg:last-child { margin-left: auto; }
.s-ht { width: 99px; }
.f-ht { width: 282px; }
.e-ht { flex: 1; }

.status { flex: none; display: flex; align-items: center; height: 20px; border-top: 1px solid #d0d0d0; background: #f0f0f0; font-size: 11px; line-height: 20px; }
.status span { height: 18px; box-sizing: border-box; padding-left: 3px; border-right: 1px solid #d0d0d0; }
.s1 { width: 60px; margin-left: -1px; }
.s2 { width: 55px; }
.s3 { width: 42px; }
.s4 { width: 10px; }
.s5 { width: 138px; }
.wide .s1 { width: 80px; }
.wide .s2 { width: 74px; }
.zero .s1 { width: 54px; }
.zero .s2 { width: 49px; }

.bar { flex: none; display: flex; align-items: center; height: 23px; padding: 0 8px 0 4px; gap: 8px; border-bottom: 1px solid #9d9d9d; background: #c8c8c8; }
.bar h2 { flex: 1; }
.project { flex: none; width: 194px; background: #f0f0f0; }
.proj-name { display: flex; align-items: center; gap: 12px; height: 26px; padding: 8px 0 0 16px; font-size: 13px; }
.tree { flex: 1; margin: -2px 15px 4px 17px; padding: 2px 0 0 0; border: 1px solid #000; background: #fff; list-style: none; font: 13px/20px "Liberation Sans", sans-serif; }
.tree li { display: flex; gap: 3px; align-items: center; height: 20px; }

.log { flex: none; display: flex; flex-direction: column; height: 114px; margin-top: 4px; border: 1px solid #9d9d9d; background: #f0f0f0; }
.log-tools { flex: none; display: flex; align-items: center; height: 26px; padding-left: 4px; background: linear-gradient(90deg, #e5e4d7, #f1f0e3 50%); font-size: 13px; }
.act { gap: 6px; height: 22px; margin-right: 6px; }
.act.lined { border-left: 1px solid #b9b9b3; height: 16px; padding-left: 5px; margin-right: 6px; }
.div { width: 1px; height: 16px; margin-right: 3px; background: #b9b9b3; }
.act.chosen { box-sizing: border-box; margin: 0; padding: 0 2px; gap: 4px; border: 1px solid #4a9de0; background: #dfebf5; }
.log-list { flex: none; display: flex; height: 18px; margin-top: 10px; border: 1px solid #828790; border-right: 0; background: #fff; overflow: hidden; }
.log-list th { height: 18px; padding: 4px 0 0 7px; font-weight: 400; text-align: left; border-right: 1px solid #e0e0e0; white-space: nowrap; }
.log-list svg { margin: 2px 6px 0 auto; }
.totals { flex: 1; display: flex; align-items: center; font-size: 13px; }
.totals span { width: 100px; height: 32px; line-height: 32px; box-sizing: border-box; padding-left: 3px; border-right: 1px solid #d0d0d0; }
.mark { position: absolute; right: 14px; bottom: 8px; font-size: 20px; line-height: 24px; color: #8d8d8d; }
</style>
